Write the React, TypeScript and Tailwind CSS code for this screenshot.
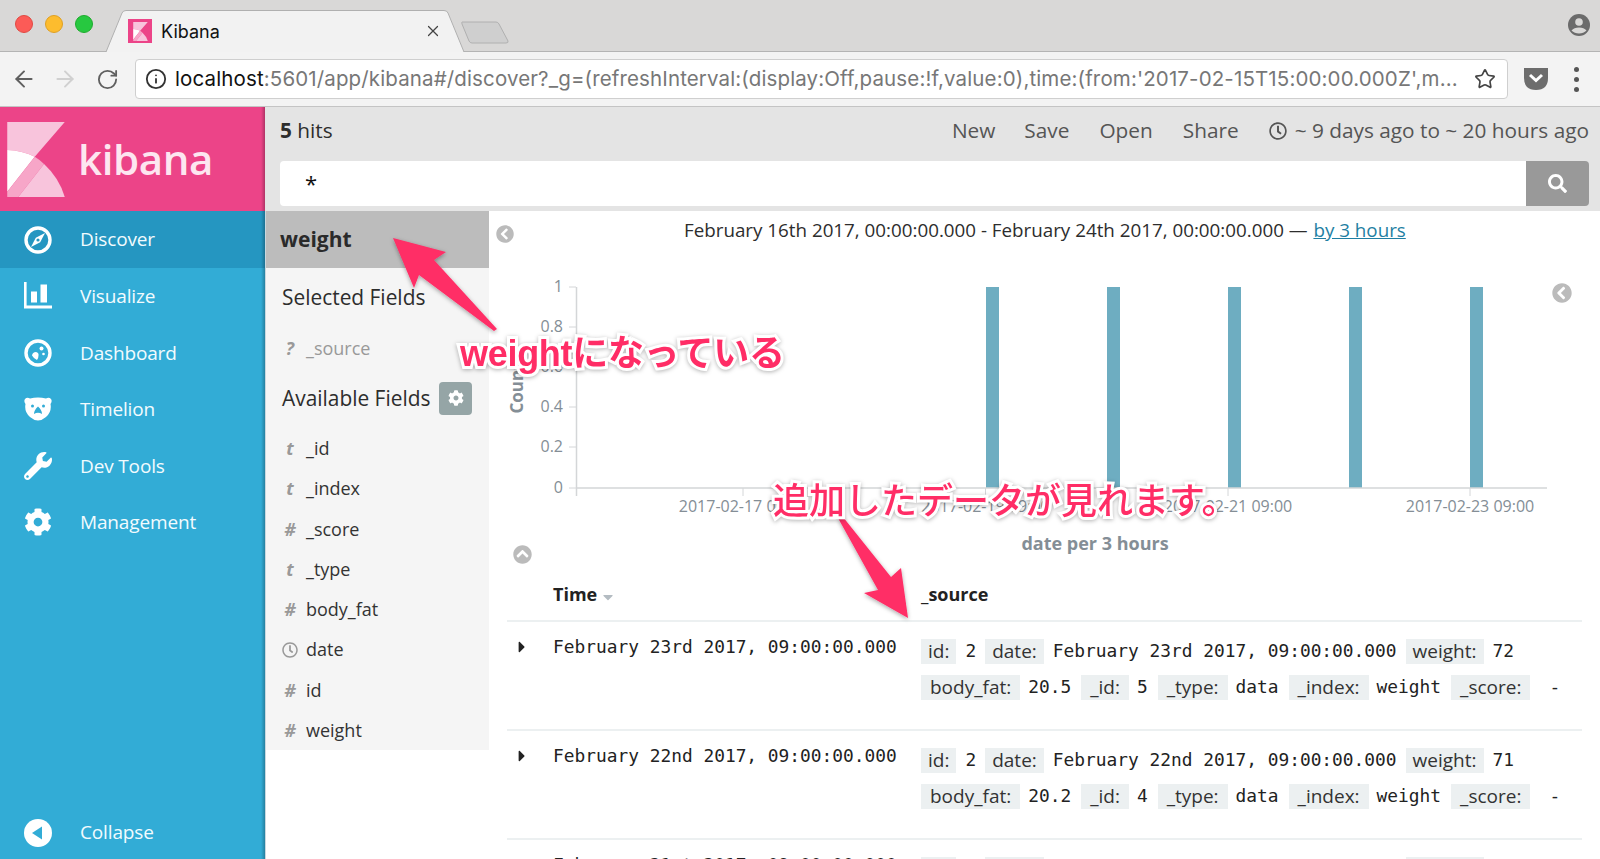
import React from "react";
import { ArrowLeft, ArrowRight, RotateCw, Info, Star, X } from "lucide-react";
import { FaCog, FaWrench, FaRegClock, FaSearch, FaChevronCircleLeft, FaChevronCircleUp, FaCaretRight, FaCaretDown } from "react-icons/fa";

function KLogo({ className }: { className: string }) {
  return (
    <svg viewBox="0 0 57.5 75" className={className}>
      <path d="M0 0H57.5L27.5 34.7Q15 28.5 0 28Z" fill="#f8c4dc" />
      <path d="M0 28Q15 28.5 27.5 34.7L0 69.7Z" fill="#fff" />
      <path d="M27.5 34.7Q33 38 36.8 42L11 75H0V69.7Z" fill="#f7a6c8" />
      <path d="M36.8 42Q52 56 57.5 75H11Z" fill="#f8c4dc" />
    </svg>
  );
}

function CompassIcon() {
  return (
    <svg viewBox="0 0 28 28" className="w-7 h-7">
      <circle cx="14" cy="14" r="12" fill="none" stroke="#fff" strokeWidth="3.4" />
      <path d="M21 7L16.2 16.2L7 21L11.8 11.8Z" fill="#fff" />
      <circle cx="14" cy="14" r="1.6" fill="#2596c1" />
    </svg>
  );
}
function BarsIcon() {
  return (
    <svg viewBox="0 0 28 28" className="w-7 h-7">
      <path d="M0 0H2.6V23.6H28V26.4H0Z" fill="#fff" />
      <rect x="7" y="9.5" width="6" height="11" fill="#fff" />
      <rect x="16.5" y="2.5" width="6.5" height="18" fill="#fff" />
    </svg>
  );
}
function DashIcon() {
  return (
    <svg viewBox="0 0 28 28" className="w-7 h-7">
      <circle cx="14" cy="14" r="12" fill="none" stroke="#fff" strokeWidth="3.4" />
      <path d="M8 16.5Q8.5 13 12 13Q15 13.5 14.5 16.5Q14.5 19 13 21Q10 20 8 16.5Z" fill="#fff" />
      <circle cx="17.5" cy="9.5" r="2" fill="#fff" />
      <circle cx="19.5" cy="15" r="1.3" fill="#fff" />
    </svg>
  );
}
function BearIcon() {
  return (
    <svg viewBox="0 0 28 24" className="w-7 h-6">
      <path d="M1 2Q3 0 6 1.5Q14 -0.5 22 1.5Q25 0 27 2Q28.5 4 26.5 7Q28 15 22 20Q18 23.5 14 23.5Q10 23.5 6 20Q0 15 1.5 7Q-0.5 4 1 2Z" fill="#fff" />
      <circle cx="8.5" cy="9" r="1.5" fill="#32acd6" />
      <circle cx="19.5" cy="9" r="1.5" fill="#32acd6" />
      <path d="M14 9.5Q10 13 10 17Q14 14.5 18 17Q18 13 14 9.5Z" fill="#32acd6" />
    </svg>
  );
}

function NavItem({ icon, label, active }: { icon: React.ReactNode; label: string; active?: boolean }) {
  return (
    <div className={active ? "h-[57px] flex items-center bg-[#2596c1]" : "h-[56.5px] flex items-center"}>
      <div className="w-[80px] pl-6 flex items-center">{icon}</div>
      <span className="text-[19px] font-medium text-[#f2fbfe] tracking-[-0.15px]">{label}</span>
    </div>
  );
}

function FieldRow({ type, name, muted }: { type: string; name: string; muted?: boolean }) {
  return (
    <div className="h-[40.3px] flex items-center">
      <div className="w-[40px] pl-[16px] flex justify-start">
        {type === "clock" ? (
          <FaRegClock className="w-[16px] h-[16px] text-[#999] mt-px" />
        ) : (
          <span className="w-4 text-center text-[18px] font-bold italic text-[#999]">{type}</span>
        )}
      </div>
      <span className={muted ? "text-[18px] text-[#999]" : "text-[18px] text-[#333]"}>{name}</span>
    </div>
  );
}

function Tag({ label, value, wide, pad }: { label: string; value: string; wide?: boolean; pad?: boolean }) {
  return (
    <>
      <span className={wide ? "h-[25px] flex items-center px-[9px] bg-[#ecf0f1] text-[19px] text-[#333]" : "h-[25px] flex items-center px-[7px] bg-[#ecf0f1] text-[19px] text-[#333]"}>{label}</span>
      <span className={pad ? "font-['DejaVu_Sans_Mono',monospace] text-[17.85px] text-[#222] pl-[10px]" : wide ? "font-['DejaVu_Sans_Mono',monospace] text-[17.85px] text-[#222] -ml-px mr-[1px]" : "font-['DejaVu_Sans_Mono',monospace] text-[17.85px] text-[#222]"}>{value}</span>
    </>
  );
}

function DocRow({ date, weight, fat, id }: { date: string; weight: string; fat: string; id: string }) {
  return (
    <div className="h-[109px] border-b-2 border-[#ecf0f1] flex shrink-0">
      <div className="w-[46px] pl-[7px] pt-[16px]">
        <FaCaretRight className="w-[16px] h-[18px] text-[#222]" />
      </div>
      <div className="w-[368px] pt-[13px] font-['DejaVu_Sans_Mono',monospace] text-[17.85px] leading-6 text-[#222]">{date}</div>
      <div className="flex-1 pt-[16px] flex flex-col gap-[9px]">
        <div className="flex items-center gap-x-[9px]">
          <Tag label="id:" value="2" />
          <Tag label="date:" value={date} />
          <Tag label="weight:" value={weight} />
        </div>
        <div className="flex items-center gap-x-[9px]">
          <Tag wide label="body_fat:" value={fat} />
          <Tag wide label="_id:" value={id} />
          <Tag wide label="_type:" value="data" />
          <Tag wide label="_index:" value="weight" />
          <Tag wide label="_score:" value="-" pad />
        </div>
      </div>
    </div>
  );
}

function Chart() {
  const yTicks: [string, number][] = [["1", 287], ["0.8", 327], ["0.6", 367], ["0.4", 407], ["0.2", 447], ["0", 488]];
  const xTicks = [743, 985.5, 1228, 1470];
  const bars = [986, 1107, 1228, 1349, 1470];
  return (
    <svg viewBox="489 251 1111 321" className="w-[1111px] h-[321px] shrink-0 block">
      {bars.map((x) => (
        <rect key={x} x={x} y={287} width={13} height={201} fill="#6eadc1" />
      ))}
      <path d="M576.5 287V496M576 488H1547" stroke="#d4d6d8" strokeWidth="1.5" fill="none" />
      {yTicks.map(([t, y]) => (
        <g key={t}>
          <line x1={569} x2={576} y1={y} y2={y} stroke="#d4d6d8" />
          <text x={563} y={y + 5} textAnchor="end" fontSize="16" fill="#848e96">{t}</text>
        </g>
      ))}
      {xTicks.map((x) => (
        <line key={x} x1={x} x2={x} y1={488} y2={496} stroke="#d4d6d8" />
      ))}
      {["2017-02-17 09:00", "2017-02-19 09:00", "2017-02-21 09:00", "2017-02-23 09:00"].map((t, i) => (
        <text key={t} x={xTicks[i]} y={512} textAnchor="middle" fontSize="16" fill="#848e96">{t}</text>
      ))}
      <text x={1095} y={550} textAnchor="middle" fontSize="18" fontWeight="700" fill="#848e96">date per 3 hours</text>
      <text transform="translate(523 388) rotate(-90)" textAnchor="middle" fontSize="17" fontWeight="700" fill="#848e96">Count</text>
    </svg>
  );
}

export default function App() {
  return (
    <div className="relative w-full h-[859px] overflow-hidden flex flex-col bg-white font-['Open_Sans',sans-serif]">
      {/* window tab strip */}
      <div className="h-[52px] shrink-0 flex items-end bg-[#d9d8d7] border-b border-[#b4b4b4] relative">
        <div className="h-full flex items-center gap-3 pl-[15px] pb-[4px]">
          <span className="w-[18px] h-[18px] rounded-full bg-[#fc5b57] border border-[#e14942]" />
          <span className="w-[18px] h-[18px] rounded-full bg-[#fdbc2e] border border-[#dfa023]" />
          <span className="w-[18px] h-[18px] rounded-full bg-[#27c840] border border-[#1dac2c]" />
        </div>
        <div className="relative ml-[12px] w-[360px] h-[42px] -mb-px flex items-center pl-[23px] pr-[23px]">
          <svg viewBox="0 0 360 42" className="absolute inset-0 w-full h-full">
            <path d="M0 42H1L17 3Q18 .5 21 .5H339Q342 .5 343 3L359 42H360" fill="#f2f2f2" stroke="#b0b0b0" />
          </svg>
          <span className="relative w-6 h-6 bg-[#ec4488] flex items-center justify-center shrink-0 mr-[9px]">
            <KLogo className="w-[15px] h-[19px]" />
          </span>
          <span className="relative flex-1 text-[18px] text-[#111] font-['Inter',sans-serif]">Kibana</span>
          <X className="relative w-[18px] h-[18px] text-[#444]" strokeWidth={1.6} />
        </div>
        <svg viewBox="0 0 48 23" className="w-[48px] h-[23px] mb-[7px] -ml-[4px] shrink-0">
          <path d="M1 1H35Q37 1 38 3L47 20Q47.5 22 45 22H11Q9 22 8 20L1 3Q0.5 1 1 1Z" fill="#cfcfcf" stroke="#b0b0b0" />
        </svg>
        <div className="flex-1" />
        <svg viewBox="0 0 22 22" className="w-[22px] h-[22px] mr-[10px] mb-[15px] shrink-0">
          <circle cx="11" cy="11" r="11" fill="#6b6b6b" />
          <circle cx="11" cy="8" r="3.8" fill="#d9d8d7" />
          <path d="M3.5 16.5Q6 13.5 11 13.5Q16 13.5 18.5 16.5Q15.5 19.5 11 19.5Q6.5 19.5 3.5 16.5Z" fill="#d9d8d7" />
        </svg>
      </div>

      {/* address bar */}
      <div className="h-[55px] shrink-0 flex items-center bg-[#f3f3f3] border-b border-[#c4c4c4]">
        <div className="w-[135px] flex items-center pl-[11px] shrink-0">
          <ArrowLeft className="w-[26px] h-[26px] text-[#5f5f5f]" strokeWidth={1.8} />
          <ArrowRight className="w-[26px] h-[26px] ml-[15px] text-[#d0d0d0]" strokeWidth={1.8} />
          <RotateCw className="w-[23px] h-[23px] ml-[18px] text-[#5f5f5f] shrink-0" strokeWidth={1.9} />
        </div>
        <div className="w-[1373px] h-10 shrink-0 flex items-center bg-white border border-[#cfcfcf] rounded-[4px] pl-[9px] pr-[11px]">
          <Info className="w-[22px] h-[22px] text-[#333] shrink-0" strokeWidth={2} />
          <span className="ml-[8px] flex-1 whitespace-nowrap text-[20.5px] tracking-[0.13px] text-[#777] font-['Inter',sans-serif]">
            <span className="text-[#111]">localhost</span>:5601/app/kibana#/discover?_g=(refreshInterval:(display:Off,pause:!f,value:0),time:(from:'2017-02-15T15:00:00.000Z',m...
          </span>
          <Star className="w-[22px] h-[22px] text-[#444] shrink-0" strokeWidth={1.8} />
        </div>
        <svg viewBox="0 0 24 22" className="w-6 h-[22px] ml-[16px] shrink-0">
          <path d="M0 0H24V10Q24 22 12 22Q0 22 0 10Z" fill="#6d6d6d" />
          <path d="M6 7L12 12.5L18 7" fill="none" stroke="#fff" strokeWidth="3" />
        </svg>
        <div className="ml-[26px] flex flex-col gap-[5px]">
          <span className="w-[5px] h-[5px] rounded-full bg-[#555]" />
          <span className="w-[5px] h-[5px] rounded-full bg-[#555]" />
          <span className="w-[5px] h-[5px] rounded-full bg-[#555]" />
        </div>
      </div>

      {/* page */}
      <div className="flex-1 flex min-h-0">
        <aside className="relative w-[265px] shrink-0 flex flex-col bg-[#32acd6]">
          <div className="h-[104px] shrink-0 bg-[#ec4488] flex items-center pl-[7px]">
            <KLogo className="w-[58px] h-[75px] shrink-0" />
            <span className="ml-[13px] text-[42px] leading-none font-semibold text-[#fde6f0] tracking-[-0.4px]">kibana</span>
          </div>
          <NavItem active icon={<CompassIcon />} label="Discover" />
          <NavItem icon={<BarsIcon />} label="Visualize" />
          <NavItem icon={<DashIcon />} label="Dashboard" />
          <NavItem icon={<BearIcon />} label="Timelion" />
          <NavItem icon={<FaWrench className="w-7 h-7 text-white" />} label="Dev Tools" />
          <NavItem icon={<FaCog className="w-7 h-7 text-white" />} label="Management" />
          <div className="flex-1" />
          <div className="h-[52px] flex items-center pb-[1px]">
            <div className="w-[80px] pl-6">
              <svg viewBox="0 0 28 28" className="w-7 h-7">
                <circle cx="14" cy="14" r="14" fill="#fff" />
                <path d="M18 7.5V20.5L8 14Z" fill="#32acd6" />
              </svg>
            </div>
            <span className="text-[19px] font-medium text-[#f2fbfe] tracking-[-0.15px]">Collapse</span>
          </div>
          <span className="absolute top-0 right-0 bottom-0 w-[4px] bg-gradient-to-r from-transparent to-[#00000040]" />
        </aside>

        <div className="flex-1 min-w-0 flex flex-col">
          <div className="h-[104px] shrink-0 bg-[#e4e4e4] pl-[15px] pr-[11px] flex flex-col">
            <div className="h-[48px] mb-[6px] flex items-center text-[20.8px] text-[#555]">
              <span className="text-[#2d2d2d]"><b>5</b> hits</span>
              <div className="flex-1" />
              <span>New</span>
              <span className="ml-[29px]">Save</span>
              <span className="ml-[30px]">Open</span>
              <span className="ml-[30px]">Share</span>
              <FaRegClock className="ml-[30px] w-[18px] h-[18px]" />
              <span className="ml-[8px]">~ 9 days ago to ~ 20 hours ago</span>
            </div>
            <div className="h-[45px] flex">
              <div className="flex-1 bg-white rounded-l-[4px] pl-[25px] pt-[6px] text-[22px] text-[#111]">*</div>
              <div className="w-[63px] bg-[#999] rounded-r-[4px] flex items-center justify-center">
                <FaSearch className="w-[19px] h-[19px] text-white" />
              </div>
            </div>
          </div>

          <div className="flex-1 flex min-h-0">
            <div className="w-[224px] shrink-0 flex flex-col border-l border-[#c9d8df]">
              <div className="h-[57px] shrink-0 bg-[#bcbcbc] flex items-center pl-[14px] text-[21px] font-bold text-[#2a2a2a]">weight</div>
              <div className="h-[482px] shrink-0 bg-[#f5f5f5]">
                <div className="h-[60px] flex items-center pl-[16px] text-[20.9px] text-[#2d2d2d]">Selected Fields</div>
                <FieldRow type="?" name="_source" muted />
                <div className="h-[60px] flex items-center pl-[16px] text-[20.9px] text-[#2d2d2d]">
                  Available Fields
                  <span className="ml-[9px] w-[33px] h-[33px] rounded-[4px] bg-[#95a5a6] flex items-center justify-center">
                    <FaCog className="w-4 h-4 text-white" />
                  </span>
                </div>
                <FieldRow type="t" name="_id" />
                <FieldRow type="t" name="_index" />
                <FieldRow type="#" name="_score" />
                <FieldRow type="t" name="_type" />
                <FieldRow type="#" name="body_fat" />
                <FieldRow type="clock" name="date" />
                <FieldRow type="#" name="id" />
                <FieldRow type="#" name="weight" />
              </div>
            </div>

            <main className="relative flex-1 min-w-0 flex flex-col">
              <div className="h-[38px] mb-[2px] shrink-0 flex items-center pl-[195px] text-[18.8px] text-[#2d2d2d] whitespace-nowrap">
                February 16th 2017, 00:00:00.000 - February 24th 2017, 00:00:00.000 —&nbsp;<span className="ml-[1px] text-[#1f7fa3] underline">by 3 hours</span>
              </div>
              <FaChevronCircleLeft className="absolute left-[7px] top-[14px] w-[18px] h-[18px] text-[#bbb]" />
              <FaChevronCircleLeft className="absolute right-[28px] top-[72px] w-5 h-5 text-[#bbb]" />
              <FaChevronCircleUp className="absolute left-[24px] top-[334px] w-[19px] h-[19px] text-[#bbb]" />
              <Chart />
              <div className="mx-[18px] flex flex-col">
                <div className="h-[50px] shrink-0 flex items-center pb-[4px] border-b-2 border-[#ecf0f1] text-[18px] font-bold text-[#222]">
                  <div className="w-[46px]" />
                  <div className="w-[368px] flex items-center">
                    Time
                    <FaCaretDown className="ml-[3px] w-[16px] h-[16px] text-[#b4bcc2] mt-[6px]" />
                  </div>
                  <div>_source</div>
                </div>
                <DocRow date="February 23rd 2017, 09:00:00.000" weight="72" fat="20.5" id="5" />
                <DocRow date="February 22nd 2017, 09:00:00.000" weight="71" fat="20.2" id="4" />
                <DocRow date="February 21st 2017, 09:00:00.000" weight="70" fat="20.1" id="3" />
              </div>
            </main>
          </div>
        </div>
      </div>

      {/* annotations laid on top of the screenshot */}
      <svg viewBox="0 0 1600 859" className="absolute inset-0 w-[1600px] h-[859px] pointer-events-none">
        <defs>
          <filter id="annShadow" x="-20%" y="-20%" width="140%" height="140%">
            <feDropShadow dx="0" dy="1.5" stdDeviation="2" floodColor="#000" floodOpacity="0.35" />
          </filter>
        </defs>
        <g filter="url(#annShadow)" fill="#ff2d66">
          <path d="M393 238L446 252L434 260L497 329L494 331L419 275L414 288Z" />
          <path d="M908 618L864 593L878 590L838 518L843 517L891 577L901 568Z" />
        </g>
      </svg>
      <div className="absolute left-[460px] top-[332px] text-[36px] leading-[44px] font-bold text-[#ff2d66] whitespace-nowrap font-['Liberation_Sans','Noto_Sans_CJK_JP',sans-serif] tracking-[-0.3px] [-webkit-text-stroke:6px_white] [paint-order:stroke_fill] drop-shadow-[0_1px_2px_rgba(0,0,0,0.3)]">
        weightになっている
      </div>
      <div className="absolute left-[773px] top-[476px] text-[36px] leading-[44px] font-medium text-[#ff2d66] whitespace-nowrap font-['Noto_Sans_CJK_JP',sans-serif] [-webkit-text-stroke:6px_white] [paint-order:stroke_fill] drop-shadow-[0_1px_2px_rgba(0,0,0,0.3)]">
        追加したデータが見れます。
      </div>
    </div>
  );
}
